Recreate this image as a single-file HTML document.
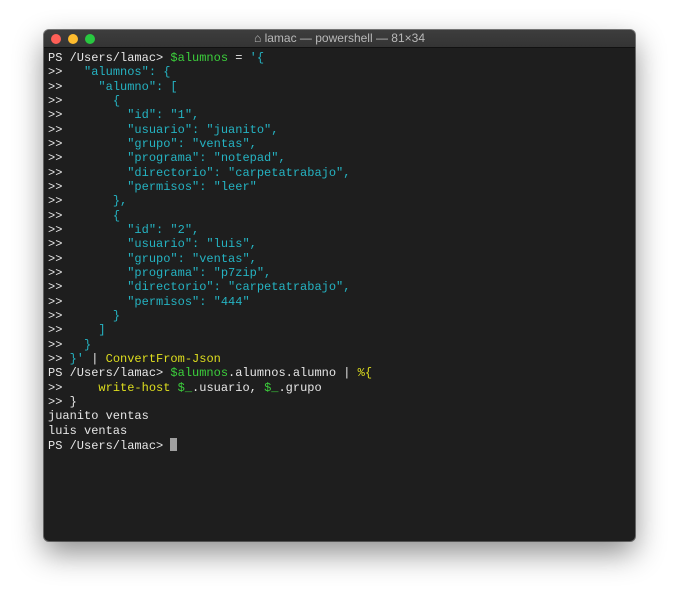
<!DOCTYPE html>
<html><head><meta charset="utf-8"><style>
html,body{margin:0;padding:0;width:679px;height:600px;background:#fff;overflow:hidden}
.win{position:absolute;left:44px;top:30px;width:591px;height:511px;background:#1e1e1e;border-radius:5px;box-shadow:0 12px 30px rgba(0,0,0,.45),0 0 0 1px rgba(0,0,0,.5);overflow:hidden}
.tb{height:17px;background:linear-gradient(#3d3d3d,#343434);border-bottom:1px solid #111;position:relative;font:12px "Liberation Sans",sans-serif;color:#b8b8b8;text-align:center;line-height:17px}
.d{position:absolute;top:4px;width:10px;height:10px;border-radius:50%}
pre{margin:0;position:absolute;left:4px;top:21px;font:12px/14.33px "Liberation Mono",monospace;color:#e6e6e6}
.c{color:#25b3c2}.g{color:#3ccf3c}.y{color:#dede1e}
.cur{display:inline-block;width:7px;height:13px;background:#a0a0a0;vertical-align:-2px}
</style></head><body>
<div class="win">
<div class="tb"><span class="d" style="left:7px;background:#fe5f57"></span><span class="d" style="left:24px;background:#febc2e"></span><span class="d" style="left:41px;background:#28c840"></span>⌂ lamac — powershell — 81×34</div>
<pre>PS /Users/lamac&gt; <span class="g">$alumnos</span> = <span class="c">'{</span>
&gt;&gt;   <span class="c">"alumnos": {</span>
&gt;&gt;     <span class="c">"alumno": [</span>
&gt;&gt;       <span class="c">{</span>
&gt;&gt;         <span class="c">"id": "1",</span>
&gt;&gt;         <span class="c">"usuario": "juanito",</span>
&gt;&gt;         <span class="c">"grupo": "ventas",</span>
&gt;&gt;         <span class="c">"programa": "notepad",</span>
&gt;&gt;         <span class="c">"directorio": "carpetatrabajo",</span>
&gt;&gt;         <span class="c">"permisos": "leer"</span>
&gt;&gt;       <span class="c">},</span>
&gt;&gt;       <span class="c">{</span>
&gt;&gt;         <span class="c">"id": "2",</span>
&gt;&gt;         <span class="c">"usuario": "luis",</span>
&gt;&gt;         <span class="c">"grupo": "ventas",</span>
&gt;&gt;         <span class="c">"programa": "p7zip",</span>
&gt;&gt;         <span class="c">"directorio": "carpetatrabajo",</span>
&gt;&gt;         <span class="c">"permisos": "444"</span>
&gt;&gt;       <span class="c">}</span>
&gt;&gt;     <span class="c">]</span>
&gt;&gt;   <span class="c">}</span>
&gt;&gt; <span class="c">}'</span> | <span class="y">ConvertFrom-Json</span>
PS /Users/lamac&gt; <span class="g">$alumnos</span>.alumnos.alumno | <span class="y">%{</span>
&gt;&gt;     <span class="y">write-host</span> <span class="g">$_</span>.usuario, <span class="g">$_</span>.grupo
&gt;&gt; }
juanito ventas
luis ventas
PS /Users/lamac&gt; <span class="cur"></span></pre>
</div>
</body></html>
